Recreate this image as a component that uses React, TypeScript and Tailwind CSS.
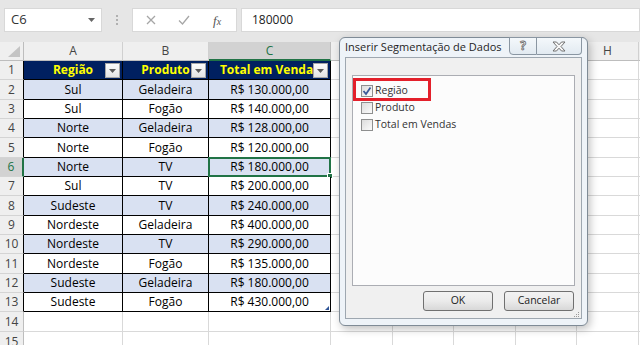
import React from "react";

const FONT = "font-['Open_Sans','Noto_Sans',sans-serif]";

const rowH = [
  "h-[19px]", "h-[20px]", "h-[19px]", "h-[19px]", "h-[20px]",
  "h-[19px]", "h-[19px]", "h-[20px]", "h-[19px]", "h-[19px]",
  "h-[20px]", "h-[19px]", "h-[19px]", "h-[20px]", "h-[20px]",
];

const data: [string, string, string][] = [
  ["Sul", "Geladeira", "R$ 130.000,00"],
  ["Sul", "Fogão", "R$ 140.000,00"],
  ["Norte", "Geladeira", "R$ 128.000,00"],
  ["Norte", "Fogão", "R$ 120.000,00"],
  ["Norte", "TV", "R$ 180.000,00"],
  ["Sul", "TV", "R$ 200.000,00"],
  ["Sudeste", "TV", "R$ 240.000,00"],
  ["Nordeste", "Geladeira", "R$ 400.000,00"],
  ["Nordeste", "TV", "R$ 290.000,00"],
  ["Nordeste", "Fogão", "R$ 135.000,00"],
  ["Sudeste", "Geladeira", "R$ 180.000,00"],
  ["Sudeste", "Fogão", "R$ 430.000,00"],
];

const extraCols = ["w-[62px]", "w-[61px]", "w-[62px]", "w-[61px]", "w-[62px]", "w-[40px]"];
// Letters D–G are hidden behind the dialog, I is beyond the window edge
const extraLetters = ["", "", "", "", "H", ""];

function FilterButton() {
  return (
    <div className="absolute right-[2px] top-[2px] w-[15px] h-[15px] border border-[#a6a6a6] bg-gradient-to-b from-[#fbfbfb] to-[#e4e4e4] flex items-center justify-center">
      <svg width="7" height="4" viewBox="0 0 7 4">
        <polygon points="0,0 7,0 3.5,4" fill="#5a5a5a" />
      </svg>
    </div>
  );
}

function Row({ n }: { n: number }) {
  const isTable = n <= 13;
  const isHeader = n === 1;
  const band = n >= 2 && n <= 13 && n % 2 === 0;
  const d = isTable && !isHeader ? data[n - 2] : null;
  const selected = n === 6;

  let rh = "border-r border-r-[#bdbdbd] bg-[#efefef] text-[#444]";
  if (isTable) rh = "border-r border-r-black bg-[#efefef] text-[#444]";
  if (selected) rh = "border-r-2 border-r-[#217346] bg-[#d2d2d2] text-[#217346]";

  const cellBg = isHeader ? "bg-[#002060]" : band ? "bg-[#d9e1f2]" : "bg-white";
  const tableCell = `relative shrink-0 border-r border-b border-black ${cellBg} flex items-center justify-center overflow-visible whitespace-nowrap`;
  const plainCell = "shrink-0 border-r border-b border-[#d9d9d9] bg-white";

  return (
    <div className={`flex ${rowH[n - 1]}`}>
      <div className={`w-[24px] shrink-0 flex items-center justify-center border-b border-b-[#d4d4d4] text-[12px] ${rh}`}>
        {n}
      </div>
      {isHeader ? (
        <>
          <div className={`${tableCell} w-[99px] overflow-hidden text-[#ffff00] font-bold text-[12px]`}>
            <span>Região</span>
            <FilterButton />
          </div>
          <div className={`${tableCell} w-[86px] overflow-hidden text-[#ffff00] font-bold text-[12px]`}>
            <span>Produto</span>
            <FilterButton />
          </div>
          <div className={`${tableCell} w-[122px] overflow-hidden text-[#ffff00] font-bold text-[12px]`}>
            <span>Total em Vendas</span>
            <FilterButton />
          </div>
        </>
      ) : d ? (
        <>
          <div className={`${tableCell} w-[99px] text-[12px] text-black`}>{d[0]}</div>
          <div className={`${tableCell} w-[86px] text-[12px] text-black`}>{d[1]}</div>
          <div className={`${tableCell} w-[122px] text-[12px] text-black`}>
            <span>{d[2]}</span>
            {selected && (
              <div className="absolute -left-[1px] -top-[1px] -right-[1px] -bottom-[1px] border-2 border-[#217346]">
                <div className="absolute -right-[4px] -bottom-[4px] w-[6px] h-[6px] bg-[#217346] border border-white" />
              </div>
            )}
            {n === 13 && (
              <svg className="absolute right-[1px] bottom-[1px]" width="4" height="4" viewBox="0 0 4 4">
                <polygon points="4,0 4,4 0,4" fill="#2f5597" />
              </svg>
            )}
          </div>
        </>
      ) : (
        <>
          <div className={`${plainCell} w-[99px]`} />
          <div className={`${plainCell} w-[86px]`} />
          <div className={`${plainCell} w-[122px]`} />
        </>
      )}
      {extraCols.map((w, i) => (
        <div key={i} className={`${plainCell} ${w}`} />
      ))}
    </div>
  );
}

function TopBar() {
  return (
    <div className="h-[42px] bg-[#e6e6e6] flex items-start pt-[8px] pl-[4px]">
      <div className="w-[98px] h-[24px] bg-white border border-[#d8d8d8] flex items-center pl-[6px] pr-[6px] text-[13px] text-[#333]">
        <span>C6</span>
        <svg className="ml-auto" width="7" height="4" viewBox="0 0 7 4">
          <polygon points="0,0 7,0 3.5,4" fill="#666" />
        </svg>
      </div>
      <div className="w-[30px] h-[24px] flex flex-col items-center justify-center gap-[2px]">
        <div className="w-[2px] h-[2px] bg-[#b0b0b0]" />
        <div className="w-[2px] h-[2px] bg-[#b0b0b0]" />
        <div className="w-[2px] h-[2px] bg-[#b0b0b0]" />
      </div>
      <div className="w-[105px] h-[24px] bg-white border border-[#d8d8d8] flex items-center">
        <svg className="ml-[13px]" width="10" height="10" viewBox="0 0 10 10">
          <path d="M1 1 L9 9 M9 1 L1 9" stroke="#a6a6a6" strokeWidth="1.3" fill="none" />
        </svg>
        <svg className="ml-[22px]" width="12" height="10" viewBox="0 0 12 10">
          <path d="M1 5.5 L4.5 9 L11 1" stroke="#a6a6a6" strokeWidth="1.3" fill="none" />
        </svg>
        <span className="ml-[23px] text-[13px] italic text-[#555] font-['Liberation_Serif',serif] leading-none">
          f<span className="text-[10px]">x</span>
        </span>
      </div>
      <div className="ml-[4px] flex-1 h-[24px] bg-white border border-[#d8d8d8] flex items-center pl-[10px] text-[12px] text-[#222]">
        180000
      </div>
    </div>
  );
}

function ColHeader() {
  const base = "shrink-0 flex items-center justify-center border-r border-r-[#d0d0d0] border-b border-b-[#bdbdbd] bg-[#efefef] text-[12px] text-[#444]";
  return (
    <div className="flex h-[19px]">
      <div className="relative w-[24px] shrink-0 border-r border-r-[#bdbdbd] border-b border-b-[#bdbdbd] bg-[#efefef]">
        <svg className="absolute right-[3px] bottom-[3px]" width="12" height="11" viewBox="0 0 12 11">
          <polygon points="12,0 12,11 0,11" fill="#c4c4c4" />
        </svg>
      </div>
      <div className={`${base} w-[99px]`}>A</div>
      <div className={`${base} w-[86px]`}>B</div>
      <div className="shrink-0 w-[122px] flex items-center justify-center border-r border-r-[#bdbdbd] border-b-2 border-b-[#217346] bg-[#d2d2d2] text-[12px] text-[#217346]">
        C
      </div>
      {extraCols.map((w, i) => (
        <div key={i} className={`${base} ${w}`}>{extraLetters[i]}</div>
      ))}
    </div>
  );
}

function Checkbox({ checked }: { checked?: boolean }) {
  return (
    <div className="w-[12px] h-[12px] border border-[#8e8f8f] bg-gradient-to-br from-[#dcdcdc] to-[#fbfbfb] flex items-center justify-center shrink-0">
      {checked && (
        <svg width="10" height="10" viewBox="0 0 10 10">
          <path d="M1.5 5 L4 8 L8.5 1.5" stroke="#3b5998" strokeWidth="1.8" fill="none" />
        </svg>
      )}
    </div>
  );
}

function Dialog() {
  return (
    <div className={`absolute left-[339px] top-[37px] w-[249px] h-[289px] rounded-[6px] border border-[#7f8b96] bg-[#eef3f8] shadow-[2px_3px_8px_rgba(0,0,0,0.25)] flex flex-col ${FONT}`}>
      <div className="h-[19px] flex items-start shrink-0">
        <span className="ml-[5px] mt-[2px] text-[11px] text-[#1e1e1e] leading-[14px]">Inserir Segmentação de Dados</span>
        <div className="ml-auto mr-[5px] -mt-[1px] flex">
          <div className="w-[28px] h-[18px] border border-[#8a96a2] rounded-bl-[4px] bg-gradient-to-b from-[#f4f8fb] to-[#e2eaf1] flex items-center justify-center">
            <span className="text-[12px] font-bold text-white leading-none [-webkit-text-stroke:0.8px_#6a6a6a]">?</span>
          </div>
          <div className="w-[45px] h-[18px] border border-l-0 border-[#8a96a2] rounded-br-[4px] bg-gradient-to-b from-[#f4f8fb] to-[#e2eaf1] flex items-center justify-center">
            <svg width="14" height="11" viewBox="0 0 14 11">
              <polygon
                points="1,1 4.5,1 7,3.8 9.5,1 13,1 9,5.5 13,10 9.5,10 7,7.2 4.5,10 1,10 5,5.5"
                fill="#f8f8f8"
                stroke="#707070"
                strokeWidth="1"
                strokeLinejoin="round"
              />
            </svg>
          </div>
        </div>
      </div>
      <div className="mx-[5px] h-[262px] shrink-0 bg-[#f0f0f0] border border-[#9ea7b0] flex flex-col pt-[17px] pl-[6px] pr-[6px]">
        <div className="relative w-[223px] h-[211px] bg-[#fcfcfc] border border-[#abadb3]">
          <div className="absolute left-[0px] top-[2px] w-[78px] h-[23px] border-[3px] border-[#e3202b]" />
          <div className="flex flex-col pl-[8px] pt-[9px] gap-[5px] text-[10.5px] text-[#333]">
            <div className="flex items-center gap-[2px] h-[12px]">
              <Checkbox checked />
              <span>Região</span>
            </div>
            <div className="flex items-center gap-[2px] h-[12px]">
              <Checkbox />
              <span>Produto</span>
            </div>
            <div className="flex items-center gap-[2px] h-[12px]">
              <Checkbox />
              <span>Total em Vendas</span>
            </div>
          </div>
        </div>
        <div className="relative flex justify-end gap-[11px] mt-[5px] pr-[1px]">
          <div className="w-[70px] h-[20px] rounded-[3px] border border-[#707070] bg-gradient-to-b from-[#f2f2f2] via-[#ebebeb] to-[#d8d8d8] flex items-center justify-center text-[10.5px] text-[#222]">
            OK
          </div>
          <div className="w-[70px] h-[20px] rounded-[3px] border border-[#707070] bg-gradient-to-b from-[#f2f2f2] via-[#ebebeb] to-[#d8d8d8] flex items-center justify-center text-[10.5px] text-[#222]">
            Cancelar
          </div>
          <svg className="absolute -right-[5px] top-[20px]" width="7" height="7" viewBox="0 0 7 7">
            <rect x="5" y="1" width="1" height="1" fill="#9a9a9a" />
            <rect x="3" y="3" width="1" height="1" fill="#9a9a9a" />
            <rect x="5" y="3" width="1" height="1" fill="#9a9a9a" />
            <rect x="1" y="5" width="1" height="1" fill="#9a9a9a" />
            <rect x="3" y="5" width="1" height="1" fill="#9a9a9a" />
            <rect x="5" y="5" width="1" height="1" fill="#9a9a9a" />
          </svg>
        </div>
      </div>
    </div>
  );
}

export default function App() {
  return (
    <div className={`relative w-[640px] h-[345px] overflow-hidden bg-white ${FONT}`}>
      <TopBar />
      <ColHeader />
      {Array.from({ length: 15 }, (_, i) => (
        <Row key={i} n={i + 1} />
      ))}
      <Dialog />
    </div>
  );
}
